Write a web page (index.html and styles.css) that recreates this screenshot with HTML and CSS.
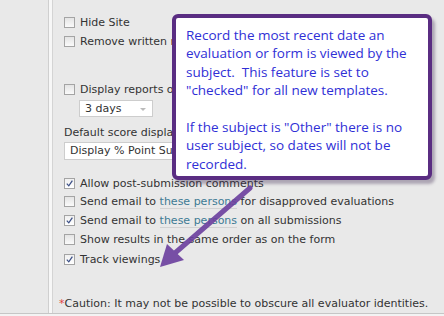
FILE: index.html
```html
<!DOCTYPE html>
<html>
<head>
<meta charset="utf-8">
<link rel="stylesheet" href="styles.css">
</head>
<body>
<div class="page">
  <div class="sidebar"></div>
  <div class="main">
    <div class="row r-hide"><span class="cb"></span><span>Hide Site</span></div>
    <div class="row"><span class="cb"></span><span>Remove written responses from evaluations</span></div>
    <div class="row r-display"><span class="cb"></span><span>Display reports only after</span></div>
    <div class="select s-days"><span>3 days</span><span class="caret"></span></div>
    <div class="label">Default score display</div>
    <div class="select s-score"><span>Display % Point Summary</span></div>
    <div class="row r-allow"><span class="cb on"><svg viewBox="0 0 10 10"><path d="M2 5.2 L4.2 7.6 L8.2 1.8" fill="none" stroke="#3b4f86" stroke-width="1.4"/></svg></span><span>Allow post-submission comments</span></div>
    <div class="row"><span class="cb"></span><span>Send email to <span class="link">these persons</span> for disapproved evaluations</span></div>
    <div class="row"><span class="cb on"><svg viewBox="0 0 10 10"><path d="M2 5.2 L4.2 7.6 L8.2 1.8" fill="none" stroke="#3b4f86" stroke-width="1.4"/></svg></span><span>Send email to <span class="link">these persons</span> on all submissions</span></div>
    <div class="row"><span class="cb"></span><span>Show results in the same order as on the form</span></div>
    <div class="row r-track"><span class="cb on"><svg viewBox="0 0 10 10"><path d="M2 5.2 L4.2 7.6 L8.2 1.8" fill="none" stroke="#3b4f86" stroke-width="1.4"/></svg></span><span>Track viewings</span></div>
    <div class="caution"><span class="ast">*</span>Caution: It may not be possible to obscure all evaluator identities.</div>
  </div>
  <svg class="arrow" viewBox="0 0 444 316" width="444" height="316">
    <line x1="250" y1="188" x2="175" y2="253" stroke="#6b3f9e" stroke-width="5" stroke-linecap="round"/>
    <polygon points="160,267 167,244 184,260" fill="#6b3f9e"/>
  </svg>
  <div class="callout">
    <p>Record the most recent date an<br>evaluation or form is viewed by the<br>subject.&nbsp; This feature is set to<br>"checked" for all new templates.</p>
    <p>If the subject is "Other" there is no<br>user subject, so dates will not be<br>recorded.</p>
  </div>
</div>
</body>
</html>
```
FILE: styles.css
```css
html, body {
  margin: 0;
  padding: 0;
  background: #f3f3f3;
}
.page {
  position: relative;
  width: 444px;
  height: 313px;
  overflow: hidden;
  background: #e9e9e9;
  border-bottom: 1px solid #c6c6c6;
  display: flex;
  font-family: "DejaVu Sans", Verdana, sans-serif;
  font-size: 11px;
  color: #333;
}
.sidebar {
  width: 48px;
  flex: none;
  border-right: 1px solid #cfcfcf;
}
.main {
  flex: 1;
  border-left: 3px solid #f7f7f7;
  box-shadow: inset 1px 0 0 #d4d4d4;
  padding: 13px 0 0 12px;
  display: flex;
  flex-direction: column;
  align-items: flex-start;
}
.row {
  height: 19.5px;
  display: flex;
  align-items: center;
  white-space: nowrap;
}
.cb {
  width: 9px;
  height: 9px;
  border: 1px solid #a4a4a4;
  background: linear-gradient(#e4e4e4, #fafafa);
  margin-right: 5px;
  flex: none;
  display: flex;
}
.cb svg {
  width: 9px;
  height: 9px;
}
.cb.on {
  background: linear-gradient(#f0f0f0, #ffffff);
}
.link {
  color: #3d7a94;
  border-bottom: 1px solid #d2d2d2;
}
.r-display {
  margin-top: 29px;
}
.select {
  height: 16px;
  border: 1px solid #cdcdcd;
  background: #fff;
  display: flex;
  align-items: center;
  white-space: nowrap;
  box-sizing: content-box;
}
.s-days {
  margin: 1px 0 0 15px;
  width: 72px;
  position: relative;
}
.s-days span:first-child {
  padding-left: 5px;
}
.caret {
  position: absolute;
  right: 6px;
  top: 7px;
  border-left: 3px solid transparent;
  border-right: 3px solid transparent;
  border-top: 3px solid #bbb;
}
.label {
  margin-top: 6px;
  height: 19px;
  line-height: 19px;
}
.s-score {
  width: 200px;
  padding-left: 5px;
}
.r-allow {
  margin-top: 14px;
}
.r-track {
  margin-top: 1px;
}
.caution {
  margin: 25px 0 0 -5px;
  height: 19px;
  line-height: 19px;
  white-space: nowrap;
}
.ast {
  color: #e04040;
}
.arrow {
  position: absolute;
  left: 0;
  top: 0;
  opacity: 0.9;
}
.callout {
  position: absolute;
  left: 172px;
  top: 14px;
  width: 242px;
  height: 158px;
  border: 4px solid #5a2d82;
  border-radius: 6px;
  background: #fff;
  box-shadow: 3px 4px 3px rgba(60, 40, 80, 0.35);
  padding: 0 0 0 10px;
  font-family: "Open Sans", sans-serif;
  font-size: 13.5px;
  line-height: 18.4px;
  color: #2f2fd6;
  white-space: nowrap;
}
.callout p {
  margin: 8px 0 0 0;
}
.callout p + p {
  margin-top: 18.4px;
}
```
